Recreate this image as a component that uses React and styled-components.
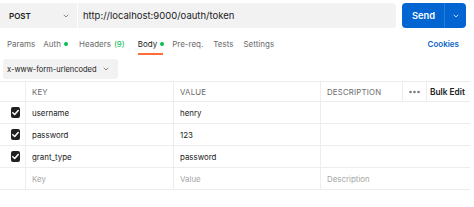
import React from "react";
import styled, { createGlobalStyle } from "styled-components";

const GlobalStyle = createGlobalStyle`
  html, body {
    margin: 0;
    padding: 0;
    background: #ffffff;
    font-family: Inter, "Noto Sans", sans-serif;
    color: #212121;
  }
`;

const Page = styled.div`
  width: 474px;
  height: 207px;
  overflow: hidden;
  background: #ffffff;
`;

const TopBar = styled.div`
  display: flex;
  align-items: stretch;
  gap: 6px;
  padding: 3px 8px 0 0;
  height: 25px;
`;

const UrlBox = styled.div`
  flex: 1;
  display: flex;
  align-items: center;
  background: #f2f2f2;
  border-radius: 0 4px 4px 0;
`;

const Method = styled.div`
  width: 78px;
  display: flex;
  align-items: center;
  justify-content: space-between;
  padding: 0 7px 0 9px;
  box-sizing: border-box;
  height: 100%;
  border-right: 1px solid #ffffff;
  font-size: 8px;
  font-weight: 600;
`;

const Url = styled.div`
  padding-left: 5px;
  font-size: 9.5px;
  color: #212121;
`;

const SendButton = styled.div`
  width: 64px;
  display: flex;
  align-items: center;
  background: #0265d2;
  border-radius: 4px;
  color: #ffffff;
  font-size: 9.3px;
  font-weight: 600;
`;

const SendLabel = styled.div`
  flex: 1;
  text-align: center;
  padding-left: 1px;
`;

const SendChevron = styled.div`
  width: 21px;
  height: 100%;
  display: flex;
  align-items: center;
  justify-content: center;
  border-left: 1px solid rgba(255, 255, 255, 0.15);
`;

const Tabs = styled.div`
  display: flex;
  align-items: center;
  padding: 0 15px 0 7px;
  height: 28px;
  margin-top: 2px;
`;

const Tab = styled.div`
  position: relative;
  display: flex;
  align-items: center;
  gap: 3px;
  margin-right: ${(p) => p.$gap || 9}px;
  font-size: 8px;
  color: ${(p) => (p.$active ? "#212121" : "#6b6b6b")};
  height: 100%;
  white-space: nowrap;

  &::after {
    content: "";
    display: ${(p) => (p.$active ? "block" : "none")};
    position: absolute;
    left: 0;
    right: 1px;
    bottom: 3px;
    height: 2px;
    background: #ff6c37;
  }
`;

const Count = styled.span`
  color: #0cbb52;
`;

const Dot = styled.span`
  width: 4px;
  height: 4px;
  border-radius: 50%;
  background: #0cbb52;
`;

const Cookies = styled.div`
  margin-left: auto;
  font-size: 8px;
  font-weight: 600;
  color: #0b66c6;
`;

const Select = styled.div`
  margin: 1px 0 2px 3px;
  width: 115px;
  height: 20px;
  box-sizing: border-box;
  display: flex;
  align-items: center;
  justify-content: space-between;
  padding: 0 8px 0 4px;
  background: #f2f2f2;
  border-radius: 3px;
  font-size: 7.5px;
  white-space: nowrap;
  color: #212121;
`;

const Table = styled.div`
  display: grid;
  grid-template-columns: 25px 148px 147px 82px 24px 1fr;
  grid-template-rows: 20px repeat(4, 22px);
  width: 470px;
`;

const Cell = styled.div`
  box-sizing: border-box;
  display: flex;
  align-items: center;
  padding: 0 6px;
  border-top: 1px solid #ededed;
  border-left: ${(p) => (p.$first ? "none" : "1px solid #ededed")};
  font-size: 7.9px;
  white-space: nowrap;
  color: ${(p) => (p.$muted ? "#a6a6a6" : "#212121")};
  grid-column: ${(p) => p.$span || "auto"};
`;

const HeadCell = styled(Cell)`
  font-size: 7.8px;
  color: #6b6b6b;
  letter-spacing: 0.2px;
  justify-content: flex-start;
`;

const MoreCell = styled(HeadCell)`
  justify-content: center;
  padding: 0;
`;

const BulkCell = styled(HeadCell)`
  padding: 0 3px;
  font-size: 8.3px;
  font-weight: 600;
  letter-spacing: 0;
  color: #212121;
`;

const Spacer = styled.div`
  grid-column: 1 / -1;
  border-top: 1px solid #ededed;
`;

const Box = styled.div`
  width: 11px;
  height: 11px;
  border-radius: 2px;
  background: #212121;
  display: flex;
  align-items: center;
  justify-content: center;
  margin-left: 5px;
`;

const Chevron = ({ color = "#6b6b6b", size = 8 }) => (
  <svg width={size} height={size} viewBox="0 0 10 10" fill="none">
    <path d="M2.5 3.8 L5 6.2 L7.5 3.8" stroke={color} strokeWidth="1" strokeLinecap="round" strokeLinejoin="round" />
  </svg>
);

const Dots = () => (
  <svg width="11" height="4" viewBox="0 0 11 4">
    <circle cx="1.5" cy="2" r="1.3" fill="#7a7a7a" />
    <circle cx="5.5" cy="2" r="1.3" fill="#7a7a7a" />
    <circle cx="9.5" cy="2" r="1.3" fill="#7a7a7a" />
  </svg>
);

const Check = () => (
  <Box>
    <svg width="9" height="9" viewBox="0 0 10 10" fill="none">
      <path d="M2 5.2 L4.1 7.2 L8 2.8" stroke="#ffffff" strokeWidth="1.7" strokeLinecap="round" strokeLinejoin="round" />
    </svg>
  </Box>
);

const rows = [
  { key: "username", value: "henry" },
  { key: "password", value: "123" },
  { key: "grant_type", value: "password" },
];

export default function App() {
  return (
    <Page>
      <GlobalStyle />
      <TopBar>
        <UrlBox>
          <Method>
            POST
            <Chevron />
          </Method>
          <Url>http://localhost:9000/oauth/token</Url>
        </UrlBox>
        <SendButton>
          <SendLabel>Send</SendLabel>
          <SendChevron>
            <Chevron color="#ffffff" />
          </SendChevron>
        </SendButton>
      </TopBar>

      <Tabs>
        <Tab $gap={8}>Params</Tab>
        <Tab $gap={11}>
          Auth <Dot />
        </Tab>
        <Tab $gap={13}>
          Headers <Count>(9)</Count>
        </Tab>
        <Tab $active $gap={8}>
          Body <Dot />
        </Tab>
        <Tab $gap={10}>Pre-req.</Tab>
        <Tab $gap={10}>Tests</Tab>
        <Tab>Settings</Tab>
        <Cookies>Cookies</Cookies>
      </Tabs>

      <Select>
        x-www-form-urlencoded
        <Chevron />
      </Select>

      <Table>
        <HeadCell $first />
        <HeadCell>KEY</HeadCell>
        <HeadCell>VALUE</HeadCell>
        <HeadCell>DESCRIPTION</HeadCell>
        <MoreCell>
          <Dots />
        </MoreCell>
        <BulkCell>Bulk Edit</BulkCell>
        {rows.map((r) => (
          <React.Fragment key={r.key}>
            <Cell $first>
              <Check />
            </Cell>
            <Cell>{r.key}</Cell>
            <Cell>{r.value}</Cell>
            <Cell $span="4 / 7" />
          </React.Fragment>
        ))}
        <Cell $first />
        <Cell $muted>Key</Cell>
        <Cell $muted>Value</Cell>
        <Cell $muted $span="4 / 7">Description</Cell>
        <Spacer />
      </Table>
    </Page>
  );
}
